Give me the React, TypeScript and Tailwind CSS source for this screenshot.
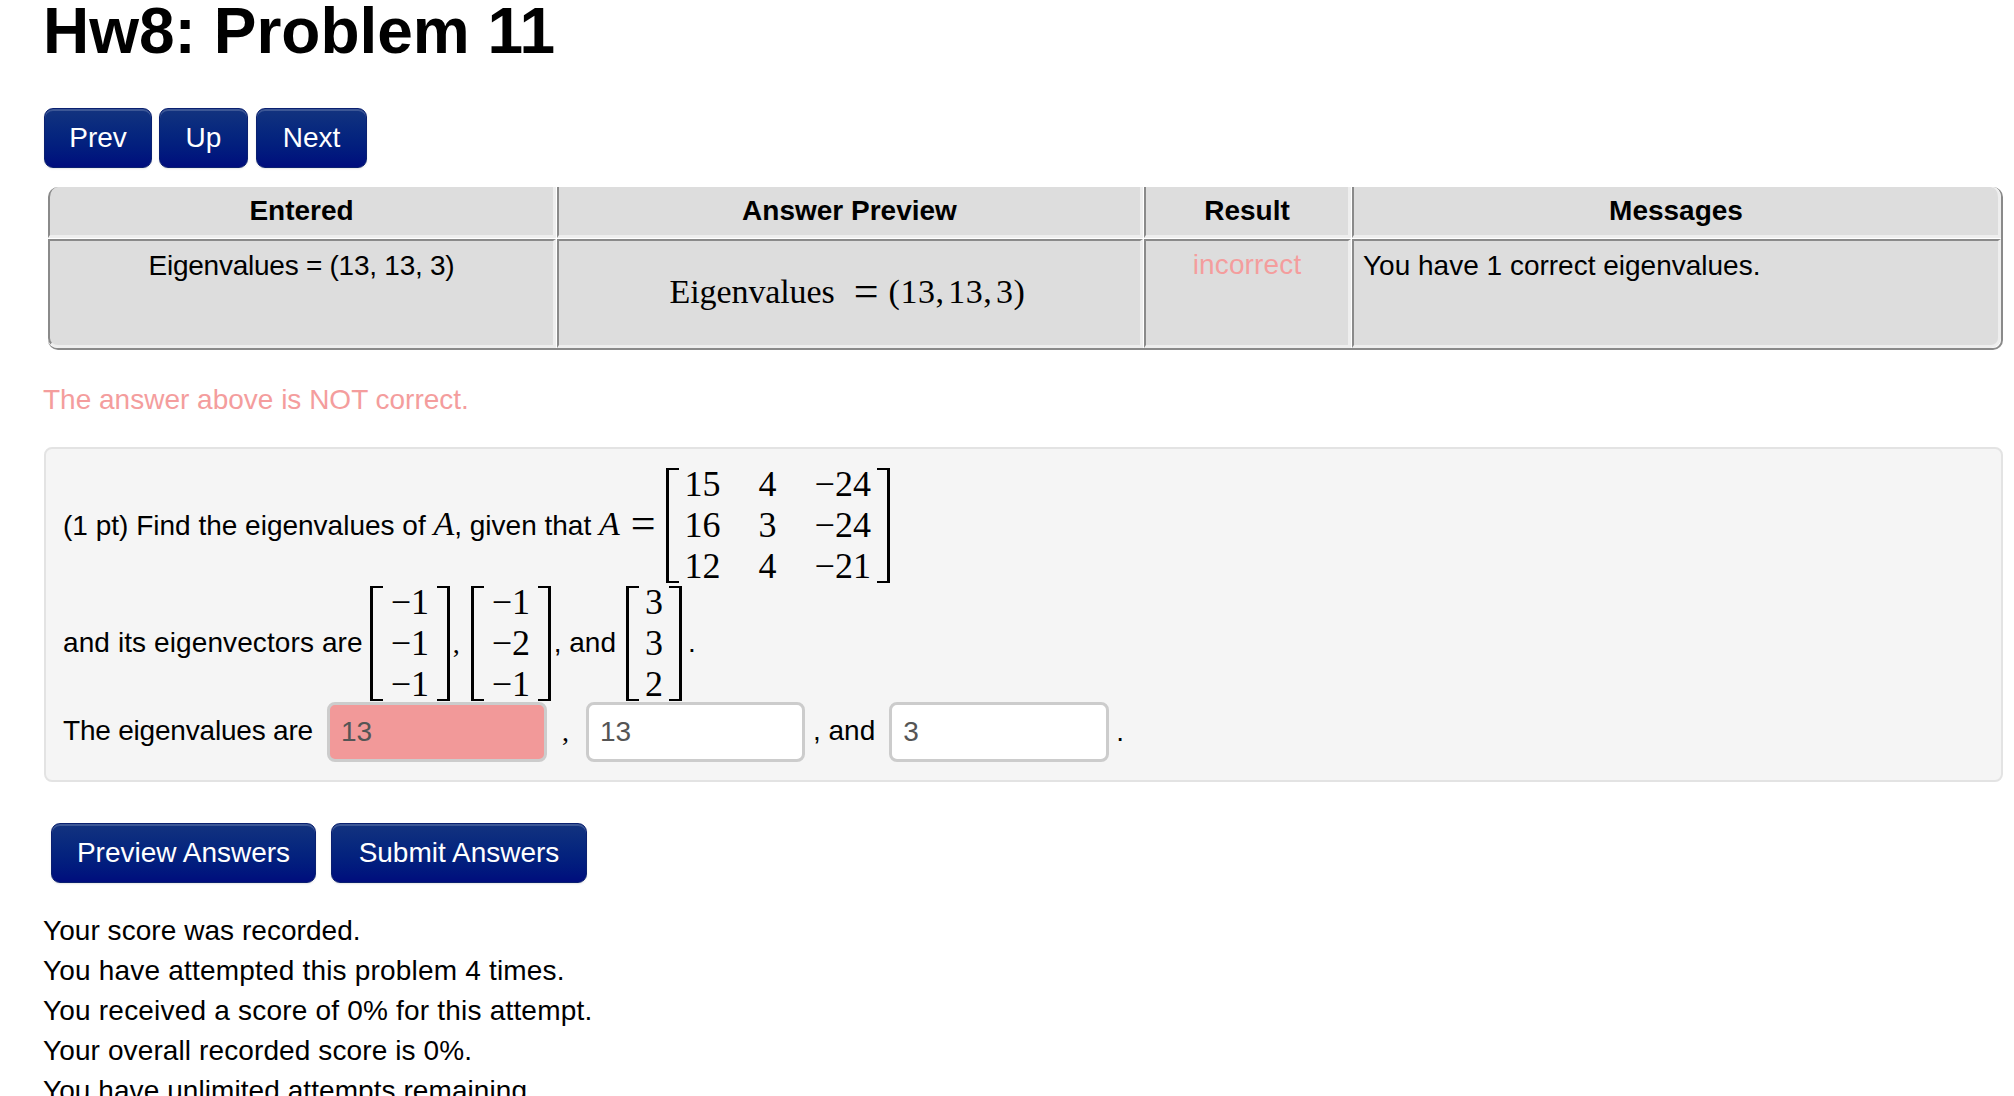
import React from "react";

function NavButton({ children, w }: { children: React.ReactNode; w: string }) {
  return (
    <button
      className={`${w} h-[60px] rounded-[9px] border border-[#0a2070] bg-gradient-to-b from-[#13337f] to-[#000c7d] text-white text-[28px] leading-[40px] text-center shadow-[inset_0_2px_0_rgba(255,255,255,0.18),0_1px_2px_rgba(0,0,0,0.1)]`}
    >
      {children}
    </button>
  );
}

function Bracket({ side }: { side: "l" | "r" }) {
  return (
    <div
      className={
        side === "l"
          ? "w-[13px] self-stretch border-l-[3px] border-y-2 border-black"
          : "w-[13px] self-stretch border-r-[3px] border-y-2 border-black"
      }
    />
  );
}

function Matrix({ rows, cols, gap, pad }: { rows: string[][]; cols: string; gap: string; pad: string }) {
  return (
    <div className="flex h-[115px] items-stretch font-['Liberation_Serif',serif] text-[36px] leading-[32px]">
      <Bracket side="l" />
      <div className={`grid ${cols} ${gap} ${pad} grid-rows-[32px_32px_32px] gap-y-[9px] self-center pb-[2px] text-center`}>
        {rows.flat().map((c, i) => (
          <span key={i}>{c}</span>
        ))}
      </div>
      <Bracket side="r" />
    </div>
  );
}

const A = () => <i className="font-['Liberation_Serif',serif] text-[34px]">A</i>;

export default function App() {
  return (
    <div className="h-[1096px] overflow-hidden bg-white pl-[44px] font-['Liberation_Sans',Arial,sans-serif] text-[28px] leading-[40px] text-black">
      <h1 className="-ml-[1px] h-[62px] text-[64px] font-bold leading-[62px]">Hw8: Problem 11</h1>

      <nav className="mt-[46px] flex gap-[7px]">
        <NavButton w="w-[108px]">Prev</NavButton>
        <NavButton w="w-[89px]">Up</NavButton>
        <div className="ml-[1px]">
          <NavButton w="w-[111px]">Next</NavButton>
        </div>
      </nav>

      <div className="ml-[4px] mt-[19px] w-[1955px] rounded-[10px] border-b-2 border-r-2 border-[#8a8a8a]">
        <div className="grid grid-cols-[508px_586px_207px_1fr] grid-rows-[51px_109px] gap-[1px]">
          <div className="rounded-tl-[10px] border-b-[3px] border-l-2 border-r-[3px] border-[#eeeeee] border-l-[#8a8a8a] bg-[#dddddd] pt-[4px] text-center font-bold">Entered</div>
          <div className="border-b-[3px] border-l-2 border-r-[3px] border-[#eeeeee] border-l-[#8a8a8a] bg-[#dddddd] pt-[4px] text-center font-bold">Answer Preview</div>
          <div className="border-b-[3px] border-l-2 border-r-[3px] border-[#eeeeee] border-l-[#8a8a8a] bg-[#dddddd] pt-[4px] text-center font-bold">Result</div>
          <div className="rounded-tr-[10px] border-b-[3px] border-l-2 border-r-[3px] border-[#eeeeee] border-l-[#8a8a8a] bg-[#dddddd] pt-[4px] text-center font-bold">Messages</div>

          <div className="rounded-bl-[10px] border-b-[3px] border-l-2 border-r-[3px] border-t-2 border-[#eeeeee] border-l-[#8a8a8a] border-t-[#8a8a8a] bg-[#dddddd] pt-[5px] text-center tracking-[-0.25px]">Eigenvalues = (13, 13, 3)</div>
          <div className="flex items-center justify-center border-b-[3px] border-l-2 border-r-[3px] border-t-2 border-[#eeeeee] border-l-[#8a8a8a] border-t-[#8a8a8a] bg-[#dddddd] pb-[3px] pr-[4px] font-['Liberation_Serif',serif] text-[34px]">
            <span className="tracking-[-0.1px]">Eigenvalues</span>
            <span className="ml-[19px] text-[44px] leading-[40px]">=</span>
            <span className="ml-[10px] tracking-[0.6px]">(13,&#8202;13,&#8202;3)</span>
          </div>
          <div className="border-b-[3px] border-l-2 border-r-[3px] border-t-2 border-[#eeeeee] border-l-[#8a8a8a] border-t-[#8a8a8a] bg-[#dddddd] pt-[4px] text-center tracking-[0.15px] text-[#f49d9d]">incorrect</div>
          <div className="rounded-br-[10px] border-b-[3px] border-l-2 border-r-[3px] border-t-2 border-[#eeeeee] border-l-[#8a8a8a] border-t-[#8a8a8a] bg-[#dddddd] pl-[9px] pt-[5px]">You have 1 correct eigenvalues.</div>
        </div>
      </div>

      <p className="-ml-[1px] mt-[30px] text-[#f49d9d]">The answer above is NOT correct.</p>

      <section className="mt-[27px] w-[1959px] rounded-[8px] border-2 border-[#e3e3e3] bg-[#f5f5f5] px-[17px] pb-[18px] pt-[19px]">
        <div className="flex items-center">
          <span className="pb-[2px]">
            (1 pt) Find the eigenvalues of <A />, given that <A />
          </span>
          <span className="ml-[11px] mr-[10px] pb-[4px] font-['Liberation_Serif',serif] text-[44px] leading-[40px]">=</span>
          <Matrix
            rows={[["15", "4", "−24"], ["16", "3", "−24"], ["12", "4", "−21"]]}
            cols="grid-cols-[36px_18px_56px]"
            gap="gap-x-[38px]"
            pad="px-[6px]"
          />
        </div>

        <div className="mt-[3px] flex items-center">
          <span className="mr-[7px] pb-[2px] tracking-[0.1px]">and its eigenvectors are</span>
          <Matrix rows={[["−1"], ["−1"], ["−1"]]} cols="grid-cols-[38px]" gap="" pad="px-[8px]" />
          <span className="ml-[3px] mr-[11px] font-['Liberation_Serif',serif]">,</span>
          <Matrix rows={[["−1"], ["−2"], ["−1"]]} cols="grid-cols-[38px]" gap="" pad="px-[8px]" />
          <span className="ml-[3px] mr-[10px] pb-[2px]">, and</span>
          <Matrix rows={[["3"], ["3"], ["2"]]} cols="grid-cols-[18px]" gap="" pad="px-[6px]" />
          <span className="ml-[6px] pb-[2px]">.</span>
        </div>

        <div className="mt-[1px] flex items-center">
          <span className="mr-[14px] pb-[2px] tracking-[-0.2px]">The eigenvalues are</span>
          <div className="flex h-[60px] w-[220px] items-center rounded-[8px] border-[3px] border-[#cccccc] bg-[#f29999] pl-[11px] text-[#555555]">13</div>
          <span className="ml-[15px] mr-[17px] font-['Liberation_Serif',serif]">,</span>
          <div className="flex h-[60px] w-[219px] items-center rounded-[8px] border-[3px] border-[#cccccc] bg-white pl-[11px] text-[#555555]">13</div>
          <span className="ml-[8px] mr-[14px] pb-[2px]">, and</span>
          <div className="flex h-[60px] w-[220px] items-center rounded-[8px] border-[3px] border-[#cccccc] bg-white pl-[11px] text-[#555555]">3</div>
          <span className="ml-[7px]">.</span>
        </div>
      </section>

      <div className="ml-[7px] mt-[41px] flex gap-[15px]">
        <NavButton w="w-[265px]">Preview Answers</NavButton>
        <NavButton w="w-[256px]">Submit Answers</NavButton>
      </div>

      <div className="-ml-[1px] mt-[28px]">
        <p className="tracking-[0.05px]">Your score was recorded.</p>
        <p className="tracking-[0.19px]">You have attempted this problem 4 times.</p>
        <p className="tracking-[0.2px]">You received a score of 0% for this attempt.</p>
        <p className="tracking-[0.11px]">Your overall recorded score is 0%.</p>
        <p className="tracking-[0.07px]">You have unlimited attempts remaining.</p>
      </div>
    </div>
  );
}
